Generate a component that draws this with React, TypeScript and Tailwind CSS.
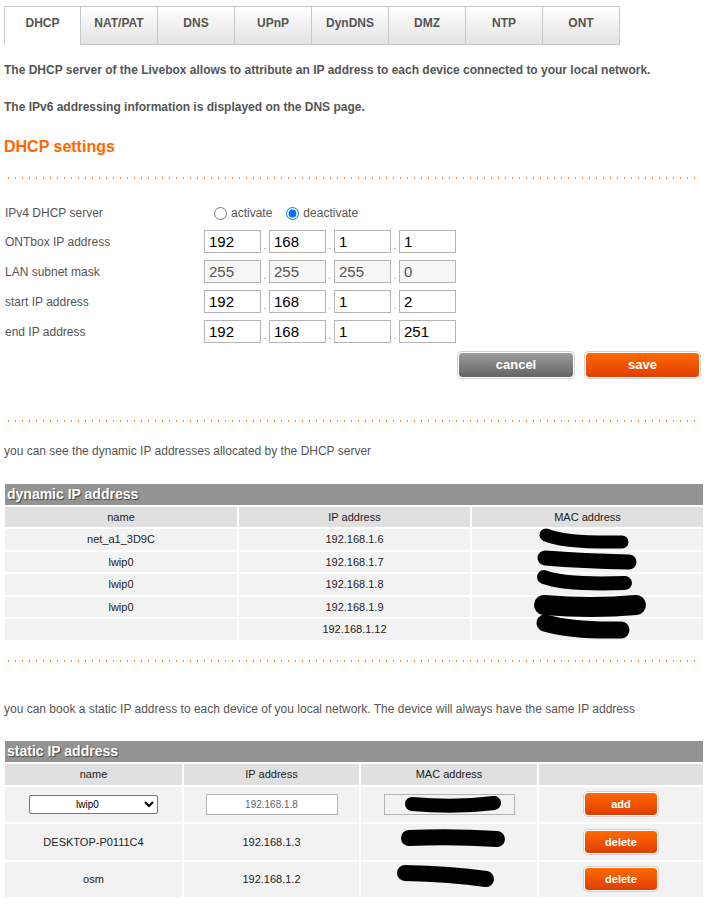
import React from 'react';

const tabs = ['DHCP', 'NAT/PAT', 'DNS', 'UPnP', 'DynDNS', 'DMZ', 'NTP', 'ONT'];

type Stroke = { x1: number; y1: number; cx: number; cy: number; x2: number; y2: number; w: number };

// black marker strokes hiding the MAC addresses
const Scribble: React.FC<{ s: Stroke }> = ({ s }) => (
    <svg className="absolute left-0 top-0 overflow-visible pointer-events-none" width="1" height="1">
        <path d={`M${s.x1} ${s.y1} Q${s.cx} ${s.cy} ${s.x2} ${s.y2}`} stroke="#000" strokeWidth={s.w} strokeLinecap="round" fill="none" />
    </svg>
);

const dynRows: { name: string; ip: string; s: Stroke }[] = [
    { name: 'net_a1_3D9C', ip: '192.168.1.6', s: { x1: 74, y1: 6, cx: 92, cy: 14, x2: 150, y2: 13, w: 13 } },
    { name: 'lwip0', ip: '192.168.1.7', s: { x1: 73, y1: 6, cx: 110, cy: 9, x2: 157, y2: 10, w: 15 } },
    { name: 'lwip0', ip: '192.168.1.8', s: { x1: 72, y1: 3, cx: 92, cy: 11, x2: 153, y2: 9, w: 14 } },
    { name: 'lwip0', ip: '192.168.1.9', s: { x1: 72, y1: 8, cx: 120, cy: 12, x2: 164, y2: 8, w: 20 } },
    { name: '', ip: '192.168.1.12', s: { x1: 73, y1: 4, cx: 100, cy: 12, x2: 149, y2: 11, w: 17 } },
];

const staticRows: { name: string; ip: string; s: Stroke }[] = [
    { name: 'DESKTOP-P0111C4', ip: '192.168.1.3', s: { x1: 48, y1: 14, cx: 90, cy: 12, x2: 136, y2: 15, w: 16 } },
    { name: 'osm', ip: '192.168.1.2', s: { x1: 44, y1: 11, cx: 90, cy: 12, x2: 125, y2: 17, w: 16 } },
];

const Dots = () => (
    <div className="h-[2px] w-[695px] bg-[radial-gradient(circle,#f7883a_0.9px,transparent_1.1px)] bg-[length:7px_2px]" />
);

const IpRow: React.FC<{ label: string; values: string[]; disabled?: boolean }> = ({ label, values, disabled }) => (
    <>
        <div className="flex items-center text-[12px] text-[#555]">{label}</div>
        <div className="flex items-end">
            {values.map((v, i) => (
                <React.Fragment key={i}>
                    {i > 0 && <span className="w-[8px] text-center text-[10px] leading-[14px] text-[#888]">.</span>}
                    <input
                        readOnly
                        value={v}
                        className={`w-[57px] h-[23px] border border-[#b4b4b4] px-[4px] text-[15px] outline-none ${disabled ? 'bg-[#f6f6f6] text-[#555]' : 'bg-white text-black'}`}
                    />
                </React.Fragment>
            ))}
        </div>
    </>
);

export default function App() {
    return (
        <div className="min-h-[909px] bg-white px-[4px] font-['Liberation_Sans',Arial,sans-serif]">
            {/* Tabs */}
            <div className="mt-[6px] flex h-[39px]">
                {tabs.map((t, i) => (
                    <div
                        key={t}
                        className={`flex w-[77px] items-center justify-center border-t border-r border-[#c8c8c8] pb-[6px] text-[12px] font-bold text-[#555] ${i === 0 ? 'border-l bg-white' : 'border-b bg-[linear-gradient(#ffffff,#e3e3e3)]'}`}
                    >
                        {t}
                    </div>
                ))}
            </div>

            <p className="mt-[18px] text-[12px] leading-[14px] font-bold text-[#555]">
                The DHCP server of the Livebox allows to attribute an IP address to each device connected to your local network.
            </p>
            <p className="mt-[23px] text-[12px] leading-[14px] font-bold text-[#555]">
                The IPv6 addressing information is displayed on the DNS page.
            </p>

            <h2 className="mt-[23px] text-[16px] leading-[19px] font-bold text-[#ff6600]">DHCP settings</h2>

            <div className="mt-[21px] pl-[1px]"><Dots /></div>

            {/* Form */}
            <div className="mt-[21px] grid grid-cols-[199px_1fr] gap-y-[7px] pl-[1px]">
                <div className="flex h-[23px] items-center pt-[2px] text-[12px] text-[#555]">IPv4 DHCP server</div>
                <div className="flex h-[23px] items-center pt-[3px] text-[12px] text-[#555]">
                    <label className="ml-[10px] flex items-center">
                        <input type="radio" name="dhcp" className="m-0 h-[13px] w-[13px]" />
                        <span className="ml-[4px]">activate</span>
                    </label>
                    <label className="ml-[14px] flex items-center">
                        <input type="radio" name="dhcp" defaultChecked className="m-0 h-[13px] w-[13px]" />
                        <span className="ml-[4px]">deactivate</span>
                    </label>
                </div>
                <IpRow label="ONTbox IP address" values={['192', '168', '1', '1']} />
                <IpRow label="LAN subnet mask" values={['255', '255', '255', '0']} disabled />
                <IpRow label="start IP address" values={['192', '168', '1', '2']} />
                <IpRow label="end IP address" values={['192', '168', '1', '251']} />
            </div>

            <div className="mt-[9px] flex w-[696px] justify-end gap-[11px]">
                <button className="h-[26px] w-[116px] rounded-[4px] border border-white bg-[linear-gradient(#9d9d9d,#636363)] text-[13px] font-bold text-white shadow-[0_0_0_1px_#d2d2d2]">
                    cancel
                </button>
                <button className="h-[26px] w-[115px] rounded-[4px] border border-white bg-[linear-gradient(#ff6a00,#df3e00)] text-[13px] font-bold text-white shadow-[0_0_0_1px_#d2d2d2]">
                    save
                </button>
            </div>

            <div className="mt-[42px] pl-[1px]"><Dots /></div>

            <p className="mt-[22px] text-[12px] leading-[14px] text-[#555]">
                you can see the dynamic IP addresses allocated by the DHCP server
            </p>

            {/* Dynamic table */}
            <div className="mt-[26px] ml-[1px] grid w-[698px] grid-cols-[232px_231px_231px] gap-[2px] text-[11px] text-[#222]">
                <div className="col-span-3 flex h-[21px] items-center bg-[#939393] pl-[2px] text-[14px] font-bold text-white [text-shadow:1px_1px_1px_#444]">
                    dynamic IP address
                </div>
                {['name', 'IP address', 'MAC address'].map((h) => (
                    <div key={h} className="flex h-[20px] items-center justify-center bg-[#e0e0e0]">{h}</div>
                ))}
                {dynRows.map((r, i) => (
                    <React.Fragment key={i}>
                        <div className="flex h-[20.5px] items-center justify-center bg-[#f2f2f2]">{r.name}</div>
                        <div className="flex h-[20.5px] items-center justify-center bg-[#f2f2f2]">{r.ip}</div>
                        <div className="relative h-[20.5px] bg-[#f2f2f2]"><Scribble s={r.s} /></div>
                    </React.Fragment>
                ))}
            </div>

            <div className="mt-[20px] pl-[1px]"><Dots /></div>

            <p className="mt-[40px] text-[12px] leading-[14px] text-[#555]">
                you can book a static IP address to each device of you local network. The device will always have the same IP address
            </p>

            {/* Static table */}
            <div className="mt-[25px] ml-[1px] grid w-[698px] grid-cols-[177px_175px_176px_164px] gap-[2px] text-[11px] text-[#222]">
                <div className="col-span-4 flex h-[21px] items-center bg-[#939393] pl-[2px] text-[14px] font-bold text-white [text-shadow:1px_1px_1px_#444]">
                    static IP address
                </div>
                {['name', 'IP address', 'MAC address', ''].map((h, i) => (
                    <div key={i} className="flex h-[21px] items-center justify-center bg-[#e0e0e0]">{h}</div>
                ))}

                <div className="flex h-[35.5px] items-center justify-center bg-[#f2f2f2]">
                    <select defaultValue="lwip0" className="h-[19px] w-[129px] rounded-[2px] border border-[#767676] bg-white text-[10px] text-black [text-align-last:center]">
                        <option>lwip0</option>
                        <option>net_a1_3D9C</option>
                    </select>
                </div>
                <div className="flex h-[35.5px] items-center justify-center bg-[#f2f2f2]">
                    <input readOnly value="192.168.1.8" className="h-[21px] w-[132px] border border-[#b4b4b4] bg-white text-center text-[10px] text-[#666] outline-none" />
                </div>
                <div className="relative flex h-[35.5px] items-center justify-center bg-[#f2f2f2]">
                    <div className="relative h-[21px] w-[131px] border border-[#b4b4b4]">
                        <Scribble s={{ x1: 27, y1: 9, cx: 70, cy: 13, x2: 109, y2: 8, w: 14 }} />
                    </div>
                </div>
                <div className="flex h-[35.5px] items-center justify-center bg-[#f2f2f2]">
                    <button className="h-[24px] w-[74px] rounded-[4px] border border-white bg-[linear-gradient(#ff6a00,#df3e00)] text-[11px] font-bold text-white shadow-[0_0_0_1px_#d2d2d2]">
                        add
                    </button>
                </div>

                {staticRows.map((r, i) => (
                    <React.Fragment key={i}>
                        <div className="flex h-[35.5px] items-center justify-center bg-[#f2f2f2]">{r.name}</div>
                        <div className="flex h-[35.5px] items-center justify-center bg-[#f2f2f2]">{r.ip}</div>
                        <div className="relative h-[35.5px] bg-[#f2f2f2]"><Scribble s={r.s} /></div>
                        <div className="flex h-[35.5px] items-center justify-center bg-[#f2f2f2]">
                            <button className="h-[24px] w-[74px] rounded-[4px] border border-white bg-[linear-gradient(#ff6a00,#df3e00)] text-[11px] font-bold text-white shadow-[0_0_0_1px_#d2d2d2]">
                                delete
                            </button>
                        </div>
                    </React.Fragment>
                ))}
            </div>
        </div>
    );
}
